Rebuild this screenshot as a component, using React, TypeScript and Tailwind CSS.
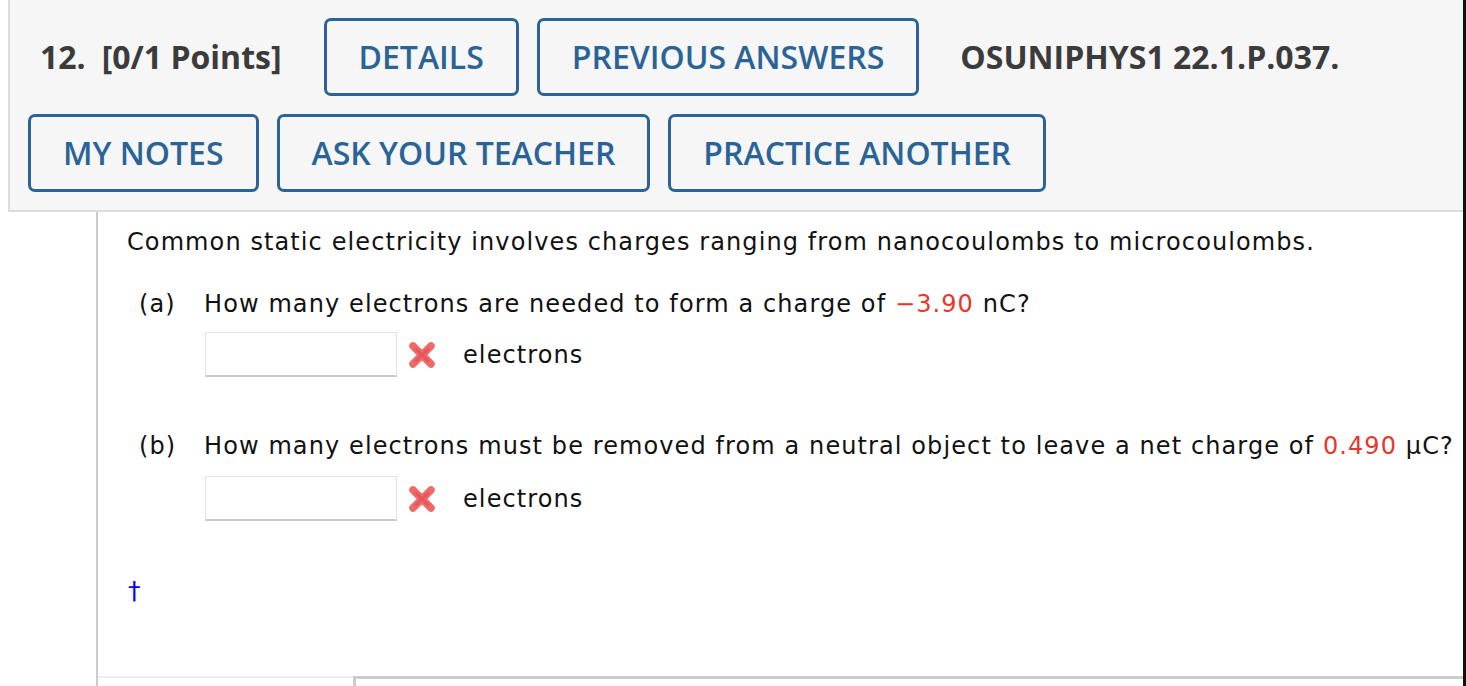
import React from 'react';

const BTN =
  'h-[78px] px-[32px] rounded-[7px] border-[3px] border-[#2a6496] text-[#2a6496] text-[32px] font-semibold flex items-center whitespace-nowrap';

function WrongMark() {
  return (
    <svg width="28" height="28" viewBox="0 0 28 28" aria-hidden className="shrink-0">
      <defs>
        <filter id="soft" x="-20%" y="-20%" width="140%" height="140%">
          <feGaussianBlur stdDeviation="0.7" />
        </filter>
      </defs>
      <g filter="url(#soft)">
        <g stroke="#ef6a6a" strokeWidth="7.5" strokeLinecap="round">
          <line x1="5" y1="5" x2="23" y2="23" />
          <line x1="23" y1="5" x2="5" y2="23" />
        </g>
        <g stroke="#de4848" strokeWidth="3" strokeLinecap="round" opacity="0.55">
          <line x1="8" y1="8" x2="20" y2="20" />
          <line x1="20" y1="8" x2="8" y2="20" />
        </g>
      </g>
    </svg>
  );
}

function AnswerRow({ className }: { className: string }) {
  return (
    <div className={`flex items-center pl-[78px] ${className}`}>
      <div className="w-[192px] h-[45px] bg-white border border-[#e4e4e4] border-b-2 border-b-[#c9c9c9]" />
      <div className="ml-[11px]">
        <WrongMark />
      </div>
      <span className="ml-[27px]">electrons</span>
    </div>
  );
}

export default function App() {
  return (
    <div className="flex w-full h-[686px] overflow-hidden bg-white">
      <div className="flex-1 flex flex-col min-w-0">
        {/* Question header */}
        <div
          className="ml-[8px] h-[212px] shrink-0 bg-[#f6f6f6] border-l-2 border-b-2 border-[#dcdcdc] pl-[18px] pt-[18px] flex flex-col gap-[18px]"
          style={{ fontFamily: '"Open Sans", "Liberation Sans", sans-serif' }}
        >
          <div className="flex items-center">
            <h2 className="ml-[12px] text-[32px] font-bold text-[#3b3b3b] whitespace-nowrap">
              12.
              <span className="ml-[16px]">[0/1 Points]</span>
            </h2>
            <div className="ml-[42px] flex gap-[18px]">
              <button className={BTN}>DETAILS</button>
              <button className={BTN}>PREVIOUS ANSWERS</button>
            </div>
            <span className="ml-[41px] text-[32px] font-bold text-[#3b3b3b] whitespace-nowrap">
              OSUNIPHYS1 22.1.P.037.
            </span>
          </div>
          <div className="flex gap-[18px]">
            <button className={BTN}>MY NOTES</button>
            <button className={BTN}>ASK YOUR TEACHER</button>
            <button className={BTN}>PRACTICE ANOTHER</button>
          </div>
        </div>

        {/* Question body */}
        <div
          className="ml-[96px] h-[464px] shrink-0 border-l-2 border-[#cccccc] pl-[29px] pt-[14px] text-[24px] leading-[32px] tracking-[1.1px] text-[#111]"
          style={{ fontFamily: 'Verdana, "DejaVu Sans", sans-serif' }}
        >
          <p className="whitespace-nowrap">
            Common static electricity involves charges ranging from nanocoulombs to microcoulombs.
          </p>

          <div className="mt-[30px] flex whitespace-nowrap">
            <span className="ml-[12px] w-[66px]">(a)</span>
            <span className="ml-[-1px]">
              How many electrons are needed to form a charge of{' '}
              <span className="text-[#e6372d]">−3.90</span> nC?
            </span>
          </div>
          <AnswerRow className="mt-[12px]" />

          <div className="mt-[53px] flex whitespace-nowrap">
            <span className="ml-[12px] w-[66px]">(b)</span>
            <span className="ml-[-1px]">
              How many electrons must be removed from a neutral object to leave a net charge of{' '}
              <span className="text-[#e6372d]">0.490</span> μC?
            </span>
          </div>
          <AnswerRow className="mt-[14px]" />

          <div className="mt-[54px] ml-[1px] text-[#0000ff] text-[25px]">†</div>
        </div>

        {/* Next block edge */}
        <div className="flex flex-1 ml-[96px] border-l-2 border-[#cccccc]">
          <div className="w-[255px] border-t-2 border-[#eeeeee]" />
          <div className="flex-1 border-t-[3px] border-l-[3px] border-[#cccccc]" />
        </div>
      </div>
      <div className="w-[3px] bg-[#111] shrink-0" />
    </div>
  );
}
